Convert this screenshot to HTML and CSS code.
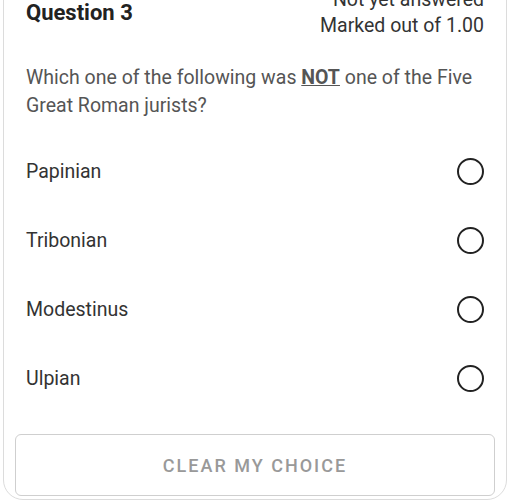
FILE: index.html
```html
<!DOCTYPE html>
<html lang="en">

<head>
    <meta charset="UTF-8">
    <meta name="viewport" content="width=device-width, initial-scale=1.0">
    <title>Question 3</title>
    <link rel="stylesheet" href="styles.css">
</head>

<body>
    <div class="card">
        <div class="qhead">
            <h3>Question 3</h3>
            <div class="info">
                <div>Not yet answered</div>
                <div>Marked out of 1.00</div>
            </div>
        </div>

        <p class="qtext">Which one of the following was <u><b>NOT</b></u> one of the Five Great Roman jurists?</p>

        <div class="answers">
            <label class="answer">
                <span>Papinian</span>
                <input type="radio" name="q3" value="0">
            </label>
            <label class="answer">
                <span>Tribonian</span>
                <input type="radio" name="q3" value="1">
            </label>
            <label class="answer">
                <span>Modestinus</span>
                <input type="radio" name="q3" value="2">
            </label>
            <label class="answer">
                <span>Ulpian</span>
                <input type="radio" name="q3" value="3">
            </label>
        </div>

        <button class="clear">Clear my choice</button>
    </div>
</body>

</html>
```

FILE: styles.css
```css
body {
    margin: 0;
    font-family: Roboto, "Liberation Sans", Arial, sans-serif;
    background-color: #fff;
    overflow: hidden;
}

.card {
    margin: -29px 3px 0;
    padding: 15px 11px 3px;
    border: 1px solid #dcdcdc;
    border-radius: 20px;
    background: #fff;
}

.qhead {
    display: flex;
    justify-content: space-between;
    align-items: center;
    padding: 0 11px;
}

.qhead h3 {
    margin: 0;
    font-size: 22px;
    font-weight: bold;
    line-height: 26px;
    color: #222;
}

.info {
    text-align: right;
    font-size: 19.5px;
    line-height: 26px;
    color: #333;
}

.qtext {
    margin: 25px 0 0;
    padding: 0 11px;
    font-size: 19.5px;
    line-height: 28px;
    color: #555;
}

.qtext b {
    font-weight: bold;
}

.answers {
    margin-top: 17px;
}

.answer {
    display: flex;
    justify-content: space-between;
    align-items: center;
    height: 69px;
    padding: 0 11px;
    font-size: 19.5px;
    line-height: 28px;
    color: #333;
    cursor: pointer;
}

.answer input {
    appearance: none;
    width: 27px;
    height: 27px;
    margin: 0;
    border: 2.5px solid #222;
    border-radius: 50%;
    cursor: pointer;
}

.answer input:checked {
    background: radial-gradient(#222 40%, #fff 45%);
}

.clear {
    display: block;
    width: 100%;
    height: 62px;
    margin-top: 21px;
    border: 1px solid #cfcfcf;
    border-radius: 6px;
    background: #fff;
    font-family: inherit;
    font-size: 18px;
    font-weight: 500;
    letter-spacing: 2px;
    text-transform: uppercase;
    color: #999;
    cursor: pointer;
}
```
